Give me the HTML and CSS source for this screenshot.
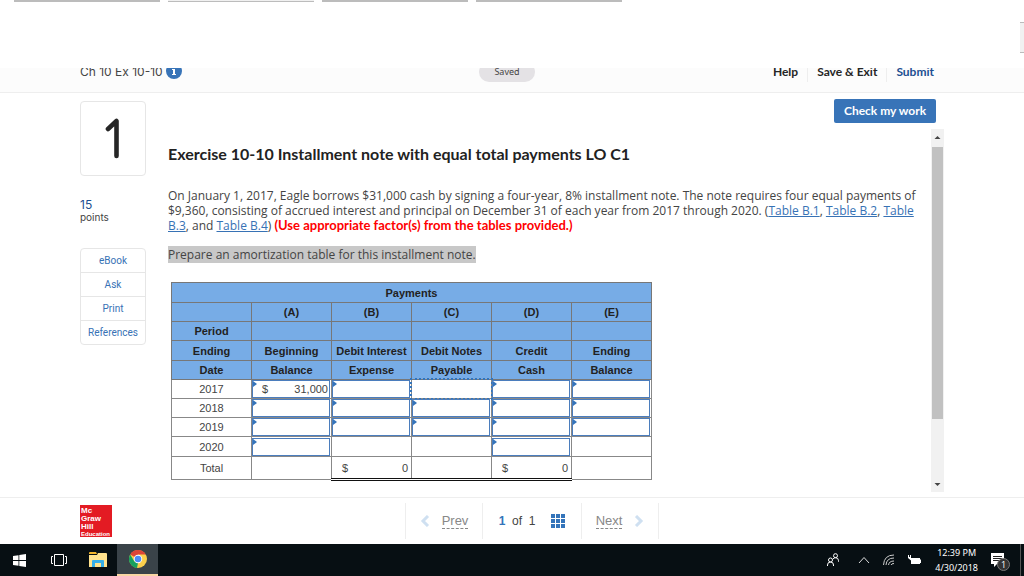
FILE: index.html
```
<!DOCTYPE html>
<html lang="en">
	<head>
		<meta charset="UTF-8">
		<title>Ch 10 Ex 10-10</title>
		<link rel="stylesheet" href="styles.css">
	</head>

	<body>
		<div class="browserTop">
			<div class="tabs">
				<span class="tab"></span>
				<span class="tab light"></span>
				<span class="tab"></span>
				<span class="tab"></span>
			</div>
			<div class="edge"></div>
		</div>

		<header class="header">
			<div class="assignment">
				<span>Ch 10 Ex 10-10</span>
				<button class="info" aria-label="Info">
					<svg width="16" height="16" viewBox="0 0 16 16"><circle cx="8" cy="8" r="8" fill="#3874b8"/><path d="M7 3h2v2H7zM6 6h3v5h1v1H6v-1h1V7H6z" fill="#fff"/></svg>
				</button>
			</div>
			<span class="saved">Saved</span>
			<nav class="actions">
				<a href="#">Help</a>
				<a href="#">Save &amp; Exit</a>
				<a href="#" class="submit">Submit</a>
			</nav>
		</header>

		<main class="main">
			<aside class="side">
				<div class="number">
					<svg width="16" height="42" viewBox="0 0 16 42"><path d="M3 11L11.500 3V38" fill="none" stroke="#262626" stroke-width="4.600" stroke-linecap="round" stroke-linejoin="round"/></svg>
				</div>
				<div class="points"><span class="score">15</span><span>points</span></div>
				<nav class="tools">
					<a href="#">eBook</a>
					<a href="#">Ask</a>
					<a href="#">Print</a>
					<a href="#">References</a>
				</nav>
			</aside>

			<section class="content">
				<div class="toolbar"><button class="checkBtn">Check my work</button></div>
				<div class="scrollArea">
					<div class="question">
						<h1>Exercise 10-10 Installment note with equal total payments LO C1</h1>
						<p>On January 1, 2017, Eagle borrows $31,000 cash by signing a four-year, 8% installment note. The note requires four equal payments of<br>$9,360, consisting of accrued interest and principal on December 31 of each year from 2017 through 2020. (<a href="#">Table B.1</a>, <a href="#">Table B.2</a>, <a href="#">Table<br>B.3</a>, and <a href="#">Table B.4</a>) <b>(Use appropriate factor(s) from the tables provided.)</b></p>
						<p><span class="selected">Prepare an amortization table for this installment note.</span></p>

						<table class="sheet">
							<thead>
								<tr class="tall"><th colspan="6">Payments</th></tr>
								<tr><th></th><th>(A)</th><th>(B)</th><th>(C)</th><th>(D)</th><th>(E)</th></tr>
								<tr><th>Period</th><th></th><th></th><th></th><th></th><th></th></tr>
								<tr class="tall"><th>Ending</th><th>Beginning</th><th>Debit Interest</th><th>Debit Notes</th><th>Credit</th><th>Ending</th></tr>
								<tr><th>Date</th><th>Balance</th><th>Expense</th><th>Payable</th><th>Cash</th><th>Balance</th></tr>
							</thead>
							<tbody>
								<tr>
									<td>2017</td>
									<td><div class="entry"><span>$</span><input type="text" value="31,000" aria-label="2017 beginning balance"></div></td>
									<td><div class="entry"><input type="text" aria-label="2017 interest expense"></div></td>
									<td><div class="entry active"><input type="text" aria-label="2017 notes payable"></div></td>
									<td><div class="entry"><input type="text" aria-label="2017 cash"></div></td>
									<td><div class="entry"><input type="text" aria-label="2017 ending balance"></div></td>
								</tr>
								<tr>
									<td>2018</td>
									<td><div class="entry"><input type="text" aria-label="2018 beginning balance"></div></td>
									<td><div class="entry"><input type="text" aria-label="2018 interest expense"></div></td>
									<td><div class="entry"><input type="text" aria-label="2018 notes payable"></div></td>
									<td><div class="entry"><input type="text" aria-label="2018 cash"></div></td>
									<td><div class="entry"><input type="text" aria-label="2018 ending balance"></div></td>
								</tr>
								<tr>
									<td>2019</td>
									<td><div class="entry"><input type="text" aria-label="2019 beginning balance"></div></td>
									<td><div class="entry"><input type="text" aria-label="2019 interest expense"></div></td>
									<td><div class="entry"><input type="text" aria-label="2019 notes payable"></div></td>
									<td><div class="entry"><input type="text" aria-label="2019 cash"></div></td>
									<td><div class="entry"><input type="text" aria-label="2019 ending balance"></div></td>
								</tr>
								<tr class="tall">
									<td>2020</td>
									<td><div class="entry"><input type="text" aria-label="2020 beginning balance"></div></td>
									<td></td>
									<td></td>
									<td><div class="entry"><input type="text" aria-label="2020 cash"></div></td>
									<td></td>
								</tr>
								<tr class="total">
									<td>Total</td>
									<td></td>
									<td class="sum"><div><span>$</span><span>0</span></div></td>
									<td class="sumTop"></td>
									<td class="sum"><div><span>$</span><span>0</span></div></td>
									<td></td>
								</tr>
							</tbody>
						</table>
					</div>
					<div class="scrollbar">
						<svg width="13" height="18" viewBox="0 0 13 18"><path d="M3.500 10L6.500 7L9.500 10z" fill="#444"/></svg>
						<div class="thumb"></div>
						<svg width="13" height="14" viewBox="0 0 13 14"><path d="M3.500 5L6.500 8L9.500 5z" fill="#444"/></svg>
					</div>
				</div>
			</section>
		</main>

		<footer class="footer">
			<div class="logo"><span>Mc</span><span>Graw</span><span>Hill</span><span class="edu">Education</span></div>
			<nav class="pager">
				<div class="pagerItem">
					<svg width="10" height="12" viewBox="0 0 10 12"><path d="M8 1L3 6L8 11" fill="none" stroke="#cfe0f1" stroke-width="3"/></svg>
					<a href="#">Prev</a>
				</div>
				<div class="pagerItem count">
					<span><b>1</b>&nbsp; of &nbsp;1</span>
					<button class="gridBtn" aria-label="All questions">
						<svg width="14" height="14" viewBox="0 0 14 14"><path d="M0 0h4v4H0zM5 0h4v4H5zM10 0h4v4h-4zM0 5h4v4H0zM5 5h4v4H5zM10 5h4v4h-4zM0 10h4v4H0zM5 10h4v4H5zM10 10h4v4h-4z" fill="#3474ba"/></svg>
					</button>
				</div>
				<div class="pagerItem">
					<a href="#">Next</a>
					<svg width="10" height="12" viewBox="0 0 10 12"><path d="M2 1L7 6L2 11" fill="none" stroke="#cfe0f1" stroke-width="3"/></svg>
				</div>
			</nav>
		</footer>

		<div class="taskbar">
			<div class="apps">
				<button aria-label="Start"><svg width="13" height="13" viewBox="0 0 13 13"><path d="M0 2L5.500 1.200V6.100H0zM6.300 1L13 0V6.100H6.300zM0 6.900H5.500V11.800L0 11zM6.300 6.900H13V13L6.300 12z" fill="#fff"/></svg></button>
				<button aria-label="Task View"><svg width="16" height="14" viewBox="0 0 16 14"><path d="M3.500 1.500h9v11h-9zM2 3.500H.5v7H2M14 3.500h1.500v7H14" fill="none" stroke="#fff"/></svg></button>
				<button aria-label="File Explorer"><svg width="18" height="16" viewBox="0 0 18 16"><path d="M0 1q0-1 1-1h6l1 2H0z" fill="#f3b62b"/><path d="M0 3h8l1-2h8q1 0 1 1v13H0z" fill="#ffe28d"/><path d="M3 15V9q0-1 1-1h10q1 0 1 1v6h-3v-4H6v4z" fill="#35aee8"/></svg></button>
				<button aria-label="Chrome" class="open"><svg width="18" height="18" viewBox="0 0 18 18"><circle cx="9" cy="9" r="9" fill="#fbcf4c"/><path d="M9 9L1.200 4.500A9 9 0 0 1 16.800 4.500H9z" fill="#db4437"/><path d="M1.200 4.500L5.200 11.200L9 13L8 18A9 9 0 0 1 1.200 4.500z" fill="#17a05e"/><circle cx="9" cy="9" r="4.200" fill="#fff"/><circle cx="9" cy="9" r="3.300" fill="#4c8bf5"/></svg></button>
			</div>
			<div class="tray">
				<svg width="12" height="14" viewBox="0 0 12 14"><g fill="none" stroke="#fff"><circle cx="3.500" cy="7" r="2"/><path d="M.5 13v-1q0-3 3-3t3 3v1"/><circle cx="8.500" cy="2.700" r="2"/><path d="M6 6q1-1.300 2.500-1.300q3 0 3 3v1"/></g></svg>
				<svg class="chevron" width="12" height="8" viewBox="0 0 12 8"><path d="M1 7L6 1.500L11 7" fill="none" stroke="#ddd"/></svg>
				<svg width="12" height="12" viewBox="0 0 12 12"><g fill="none" stroke="#ccc"><path d="M.5 11Q1 1 11 1M3 11Q3.500 4 11 4M5.500 11Q6 7 11 7M8 11Q8.500 9.500 11 9.500"/></g></svg>
				<svg width="14" height="10" viewBox="0 0 14 10"><path d="M3 3h9v1.500h1V8h-1v1H3V5.500L0 3V0h1v2h1V0h1z" fill="#fff"/></svg>
				<div class="clock"><span>12:39 PM</span><span>4/30/2018</span></div>
				<div class="notice">
					<svg width="13" height="14" viewBox="0 0 13 14"><path d="M0 0h13v11H6l-3 3v-3H0z" fill="#fff"/><path d="M2 3.500h9M2 5.500h9M2 7.500h6" stroke="#222"/></svg>
					<span class="badge">1</span>
				</div>
			</div>
		</div>
	</body>
</html>
```

FILE: styles.css
```
*{
	box-sizing:border-box;
}
body{
	margin:0;
	min-height:100vh;
	display:flex;
	flex-direction:column;
	background-color:#fff;
	color:#444;
	font-family:"Open Sans","Liberation Sans",sans-serif;
	font-size:12px;
	line-height:15px;
}
a{
	color:#3772b5;
}
button{
	border:none;
	padding:0;
	background:none;
	font-family:inherit;
}
svg{
	display:block;
	flex-shrink:0;
}
.browserTop{
	height:68px;
	display:flex;
	justify-content:space-between;
	align-items:flex-start;
}
.tabs{
	display:flex;
	gap:8px;
	padding-left:14px;
}
.tab{
	width:146px;
	height:2px;
	background-color:#bcbcbc;
}
.light{
	border-top:1px solid #f0f0f0;
}
.edge{
	width:4px;
	height:31px;
	margin-top:22px;
	border-top:1px solid #bbb;
	border-bottom:1px solid #bbb;
	background-color:#f1f1f1;
}
/* header is scrolled partly under the browser bar */
.header{
	height:25px;
	overflow:hidden;
	display:grid;
	grid-template-columns:1fr auto 1fr;
	align-items:end;
	align-content:end;
	padding:0 90px 10px 80px;
	border-bottom:1px solid #eee;
	background-color:#fcfcfc;
}
.assignment{
	display:flex;
	align-items:center;
	gap:3px;
	height:22px;
	font-family:Inter,"Liberation Sans",sans-serif;
	font-size:12px;
}
.saved{
	padding:0 15px;
	border-radius:10px;
	background-color:#e4e2e5;
	font-family:"Noto Sans",sans-serif;
	font-size:9px;
	line-height:20px;
}
.actions{
	display:flex;
	justify-content:flex-end;
	font-family:Lato,"Liberation Sans",sans-serif;
	font-size:12px;
	font-weight:700;
	line-height:20px;
}
.actions a{
	color:#262626;
	text-decoration:none;
}
.actions a + a{
	margin-left:9px;
	padding-left:9px;
	border-left:1px solid #eee;
}
.actions .submit{
	color:#1d4f91;
}
.main{
	flex:1;
	display:grid;
	grid-template-columns:66px minmax(0,1fr);
	gap:22px;
	padding:6px 80px 5px;
}
.side{
	padding-top:2px;
}
.number{
	height:75px;
	display:flex;
	justify-content:center;
	align-items:center;
	border:1px solid #e6e6e6;
	border-radius:4px;
}
.points{
	display:flex;
	flex-direction:column;
	padding:22px 0 24px;
	font-family:Inter,"Liberation Sans",sans-serif;
	font-size:10px;
	line-height:13px;
}
.score{
	color:#1d4f91;
	font-size:12px;
}
.tools{
	border:1px solid #e6e6e6;
	border-radius:4px;
	font-family:Roboto,"Liberation Sans",sans-serif;
	font-size:10px;
	line-height:23px;
	text-align:center;
}
.tools a{
	display:block;
	text-decoration:none;
}
.tools a + a{
	border-top:1px solid #e6e6e6;
}
.content{
	display:flex;
	flex-direction:column;
}
.toolbar{
	display:flex;
	justify-content:flex-end;
	padding-right:8px;
}
.checkBtn{
	width:102px;
	height:24px;
	padding-bottom:2px;
	border-radius:2px;
	background-color:#3874b8;
	color:#fff;
	font-family:Lato,"Liberation Sans",sans-serif;
	font-size:12px;
	font-weight:700;
}
.scrollArea{
	flex:1;
	display:flex;
	justify-content:space-between;
	padding-top:6px;
}
.question{
	min-width:0;
}
.question h1{
	margin:15px 0 24px;
	color:#222;
	font-family:Lato,"Liberation Sans",sans-serif;
	font-size:16px;
	line-height:20px;
}
.question p{
	margin:0 0 14px;
	white-space:nowrap;
}
.question b{
	color:#f00;
	font-family:Lato,"Liberation Sans",sans-serif;
	font-size:13px;
}
.selected{
	background-color:#c8c8c8;
}
.scrollbar{
	width:13px;
	display:flex;
	flex-direction:column;
	background-color:#f1f1f1;
}
.thumb{
	height:272px;
	margin:0 1px auto;
	background-color:#c1c1c1;
}
.sheet{
	width:481px;
	margin:20px 3px 0;
	table-layout:fixed;
	border-collapse:collapse;
	font-family:"Liberation Sans",sans-serif;
	font-size:11px;
	line-height:14px;
	text-align:center;
}
.sheet th{
	height:19px;
	padding:0;
	border:1px solid #777;
	background-color:#77ace6;
	color:#222;
}
.sheet td{
	height:19px;
	padding:0;
	border:1px solid #888;
}
.sheet .tall > *{
	height:20px;
}
.entry{
	position:relative;
	height:18px;
	display:flex;
	align-items:center;
	margin-right:1px;
	border:1px solid #4b7dbd;
}
.entry span{
	padding-left:9px;
}
.entry::before{
	content:"";
	position:absolute;
	left:0;
	top:0;
	border:3px solid transparent;
	border-left:4px solid #3474ba;
	border-right:none;
}
.entry input{
	flex:1;
	min-width:0;
	width:100%;
	height:16px;
	padding:0 1px;
	border:none;
	outline:none;
	background:none;
	color:#444;
	font:inherit;
	text-align:right;
}
.entry.active{
	margin-right:0;
	border:none;
	outline:2px dotted #3474ba;
	background-color:#fff;
}
.active::before{
	display:none;
}
.sheet .total td{
	height:23px;
}
.sheet .sum,
.sheet .sumTop{
	border-top:1px solid #111;
	border-bottom:3px double #111;
}
.sum div{
	display:flex;
	justify-content:space-between;
	padding:0 3px 0 10px;
}
.footer{
	height:47px;
	display:grid;
	grid-template-columns:1fr auto 1fr;
	align-items:center;
	padding:0 40px 0 80px;
	border-top:1px solid #eee;
}
.logo{
	width:32px;
	height:32px;
	display:flex;
	flex-direction:column;
	padding:2px 1px;
	background-color:#e31b23;
	color:#fff;
	font-family:"Liberation Sans",sans-serif;
	font-size:8px;
	font-weight:700;
	line-height:8px;
}
.edu{
	font-size:6px;
	line-height:6px;
}
.pager{
	display:flex;
	border-right:1px solid #eee;
}
.pagerItem{
	width:77px;
	height:36px;
	display:flex;
	justify-content:center;
	align-items:center;
	gap:12px;
	border-left:1px solid #eee;
	font-family:"Liberation Sans",sans-serif;
	font-size:13px;
}
.pagerItem a{
	color:#888;
	text-decoration:none;
	border-bottom:1px dashed #888;
}
.count{
	width:99px;
	gap:16px;
	font-size:12px;
}
.count b{
	color:#3474ba;
}
.taskbar{
	height:32px;
	display:flex;
	justify-content:space-between;
	background-color:#070f13;
	color:#fff;
}
.apps{
	display:flex;
}
.apps button{
	width:39px;
	display:flex;
	justify-content:center;
	align-items:center;
}
.apps .open{
	width:41px;
	border-bottom:2px solid #f9d6a4;
	background-color:#3a4349;
}
.tray{
	display:flex;
	align-items:center;
	gap:13px;
	margin-right:3px;
	padding-right:16px;
	border-right:1px solid #555;
}
.chevron{
	margin-left:6px;
}
.clock{
	display:flex;
	flex-direction:column;
	font-family:"Noto Sans",sans-serif;
	text-align:center;
	font-size:9px;
	line-height:15px;
}
.notice{
	position:relative;
}
.badge{
	position:absolute;
	left:6px;
	top:5px;
	width:13px;
	height:13px;
	border:1px solid #777;
	border-radius:50%;
	background-color:#333;
	font-size:9px;
	line-height:11px;
	text-align:center;
}
```
